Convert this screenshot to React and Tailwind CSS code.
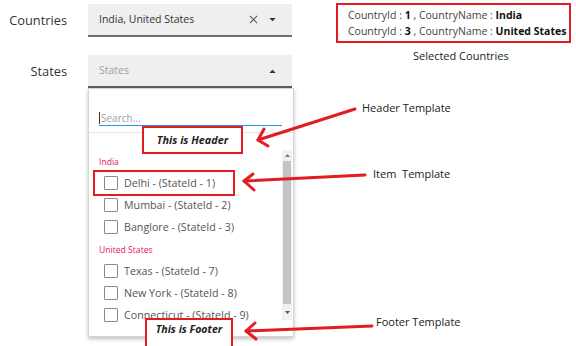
import React from "react";

// Multiselect dropdown with header / item / footer template annotations
const countries = [
  { id: 1, name: "India" },
  { id: 3, name: "United States" },
];

const groups = [
  {
    name: "India",
    states: [
      { id: 1, name: "Delhi" },
      { id: 2, name: "Mumbai" },
      { id: 3, name: "Banglore" },
    ],
  },
  {
    name: "United States",
    states: [
      { id: 7, name: "Texas" },
      { id: 8, name: "New York" },
      { id: 9, name: "Connecticut" },
    ],
  },
];

const Caret = ({ up }) => (
  <svg width="7" height="4" viewBox="0 0 8 5" className="text-[#333]">
    {up ? (
      <path d="M0 5 L4 1 L8 5 Z" fill="currentColor" />
    ) : (
      <path d="M0 0 L8 0 L4 4 Z" fill="currentColor" />
    )}
  </svg>
);

const Checkbox = () => (
  <span className="w-[14px] h-[14px] border border-[#8a8a8a] rounded-[1px] bg-white shrink-0" />
);

const StateItem = ({ state, highlight }) => {
  const label = `${state.name} - (StateId - ${state.id})`;
  if (highlight) {
    return (
      <div className="h-[26px] shrink-0 -my-[2px] ml-[4px] w-[142px] border-2 border-[#e31b23] flex items-center gap-[6px] pl-[9px] relative z-10">
        <Checkbox />
        <span className="text-[10.7px] text-[#555] whitespace-nowrap">{label}</span>
      </div>
    );
  }
  return (
    <div className="h-[22px] shrink-0 flex items-center gap-[6px] pl-[15px]">
      <Checkbox />
      <span className="text-[10.7px] text-[#555] whitespace-nowrap">{label}</span>
    </div>
  );
};

const App = () => (
  <div className="w-[576px] h-[346px] relative overflow-hidden bg-white font-['Open_Sans',sans-serif] text-[#333]">
    <div className="flex">
      {/* Form */}
      <div className="grid grid-cols-[88px_204px] gap-y-[18px] pt-[4px] items-start">
        <div className="h-[33px] flex items-center justify-end pr-[21px] text-[12.8px]">Countries</div>
        <div className="h-[33px] bg-[#efefef] border-b-2 border-[#707070] flex items-center pl-[11px] pr-[16px]">
          <span className="flex-1 text-[10.5px] text-[#333]">India, United States</span>
          <svg width="9" height="9" viewBox="0 0 10 10" className="mr-[11px]">
            <path d="M1 1 L9 9 M9 1 L1 9" stroke="#555" strokeWidth="1.2" />
          </svg>
          <Caret />
        </div>

        <div className="h-[33px] flex items-center justify-end pr-[21px] text-[12.8px]">States</div>
        <div className="flex flex-col">
          <div className="h-[33px] shrink-0 bg-[#efefef] border-b-2 border-[#5e5e5e] flex items-center pl-[11px] pr-[16px]">
            <span className="flex-1 text-[10.5px] text-[#9e9e9e]">States</span>
            <Caret up />
          </div>

          {/* Popup */}
          <div className="w-[206px] h-[249px] border border-[#d6d6d6] bg-white shadow-[0_2px_4px_rgba(0,0,0,0.25)] flex flex-col">
            <div className="shrink-0 pt-[22px] pb-[6px] px-[10px] border-b border-[#e4e4e4]">
              <div className="h-[15px] border-b border-[#2196f3] flex items-center text-[10px] text-[#a0a0a0] w-[183px]">
                <span className="w-px h-[12px] bg-[#333] mr-[1px]" />
                Search...
              </div>
            </div>
            <div className="shrink-0 -mt-[7px] ml-[53px] w-[101px] h-[28px] border-2 border-[#e31b23] bg-white flex items-center justify-center relative z-10">
              <span className="text-[10.8px] font-bold italic text-[#222]">This is Header</span>
            </div>
            <div className="shrink-0 -mt-[4px] h-[172px] flex overflow-hidden">
              <div className="flex-1 flex flex-col">
                {groups.map((g, gi) => (
                  <React.Fragment key={g.name}>
                    <div className="h-[22px] shrink-0 flex items-center pt-[3px] pl-[10px] text-[8.6px] text-[#e3165b]">{g.name}</div>
                    {g.states.map((s, si) => (
                      <StateItem key={s.id} state={s} highlight={gi === 0 && si === 0} />
                    ))}
                  </React.Fragment>
                ))}
              </div>
              <div className="w-[10px] mr-[1px] h-[170px] bg-[#f1f1f1] flex flex-col items-center">
                <div className="h-[11px] shrink-0 flex items-center justify-center">
                  <svg width="5" height="3" viewBox="0 0 5 3"><path d="M0 3 L2.5 0 L5 3 Z" fill="#777" /></svg>
                </div>
                <div className="w-[8px] h-[143px] shrink-0 bg-[#c4c4c4]" />
                <div className="flex-1 flex items-center justify-center">
                  <svg width="5" height="3" viewBox="0 0 5 3"><path d="M0 0 L5 0 L2.5 3 Z" fill="#555" /></svg>
                </div>
              </div>
            </div>
            <div className="-mt-[4px] ml-[56px] w-[88px] h-[30px] shrink-0 border-2 border-[#e31b23] bg-white flex justify-center pt-[1px] relative z-10">
              <span className="text-[10.6px] leading-[16px] font-bold italic text-[#222]">This is Footer</span>
            </div>
          </div>
        </div>
      </div>

      {/* Selected countries and template notes */}
      <div className="ml-[44px] pt-[3px] flex flex-col">
        <div className="w-[235px] h-[40px] border-2 border-[#e31b23] flex flex-col justify-center pl-[10px] text-[10.5px] leading-[16px] text-[#444]">
          {countries.map((c) => (
            <div key={c.id} className="whitespace-nowrap">
              CountryId : <b className="text-[#111]">{c.id}</b> , CountryName : <b className="text-[#111]">{c.name}</b>
            </div>
          ))}
        </div>
        <div className="mt-[5px] ml-[77px] text-[11px] text-[#222]">Selected Countries</div>
        <div className="mt-[35px] ml-[26px] text-[11px] text-[#222]">Header Template</div>
        <div className="mt-[50px] ml-[37px] text-[11px] text-[#222] whitespace-pre">Item  Template</div>
        <div className="mt-[131px] ml-[40px] text-[11px] text-[#222]">Footer Template</div>
      </div>
    </div>

    {/* Annotation arrows */}
    <svg className="absolute inset-0 pointer-events-none z-20" width="576" height="346">
      <g stroke="#e31b23" strokeWidth="3" fill="none" strokeLinecap="round" strokeLinejoin="round">
        <path d="M355 109 L258 140" />
        <path d="M264 129 L258 140 L268 146" />
        <path d="M365 175 L244 181" />
        <path d="M253 174 L244 181 L254 190" />
        <path d="M372 326 L246 331" />
        <path d="M255 323 L246 331 L256 339" />
      </g>
    </svg>
  </div>
);

export default App;
